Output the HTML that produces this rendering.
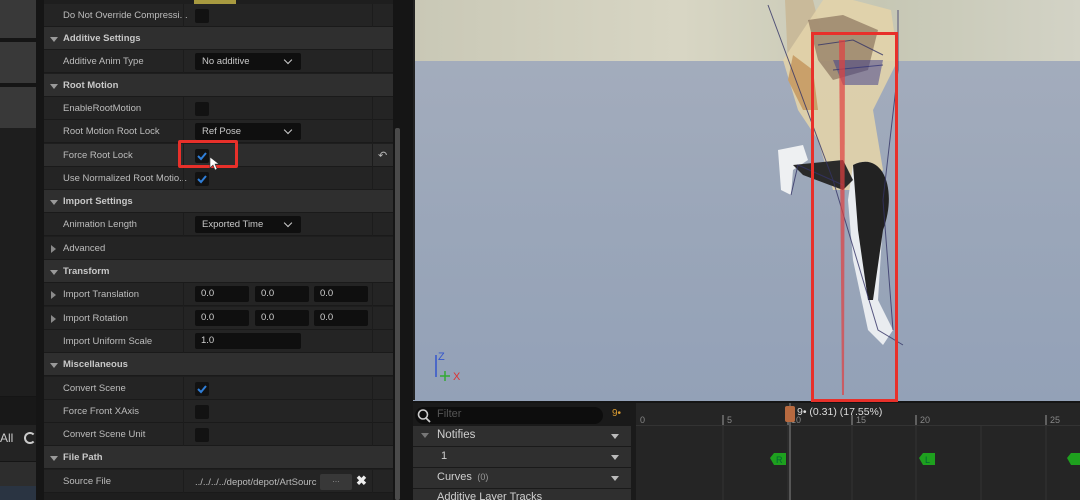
<!DOCTYPE html>
<html><head><meta charset="utf-8"><style>
*{margin:0;padding:0;box-sizing:border-box}
body{width:1080px;height:500px;overflow:hidden;background:#151515;font-family:"Liberation Sans",sans-serif;position:relative}
.a{position:absolute}
.row{position:absolute;left:44px;width:349px;height:23px;background:#242424;border-bottom:1px solid #1a1a1a}
.row .l{position:absolute;left:19px;top:6px;font-size:9.5px;color:#bdbdbd;white-space:nowrap}
.row .sp{position:absolute;left:139px;top:0;width:1px;height:23px;background:#1c1c1c}
.row .sp2{position:absolute;left:328px;top:0;width:1px;height:23px;background:#1c1c1c}
.hd{background:#2f2f2f}
.hd .l{font-weight:bold;color:#c8c8c8;left:19px}
.tri{position:absolute;left:6px;top:10px;width:0;height:0;border-left:4px solid transparent;border-right:4px solid transparent;border-top:5px solid #9a9a9a}
.trr{position:absolute;left:7px;top:8px;width:0;height:0;border-top:4px solid transparent;border-bottom:4px solid transparent;border-left:5px solid #8a8a8a}
.cb{position:absolute;left:151px;top:5px;width:14px;height:14px;background:#121212;border-radius:2px}
.cb svg{position:absolute;left:1px;top:1px}
.dd{position:absolute;left:151px;top:3px;width:106px;height:17px;background:#0f0f0f;border-radius:2px;font-size:9.5px;color:#c8c8c8;padding:3px 0 0 7px}
.dd:after{content:"";position:absolute;right:10px;top:4px;width:5px;height:5px;border-right:1.5px solid #ccc;border-bottom:1.5px solid #ccc;transform:rotate(45deg)}
.nb{position:absolute;top:3px;width:54px;height:16px;background:#0f0f0f;border-radius:2px;font-size:9.5px;color:#d0d0d0;padding:2px 0 0 6px}
.tl{position:absolute;left:413px;width:218px;height:20px;background:#2f2f2f;color:#d0d0d0;font-size:11px}
.tl .d{position:absolute;right:12px;top:8px;border-left:4px solid transparent;border-right:4px solid transparent;border-top:5px solid #bbb}
</style></head><body>
<div class="a" style="left:0;top:0;width:36px;height:38px;background:#393939"></div>
<div class="a" style="left:0;top:42px;width:36px;height:41px;background:#393939"></div>
<div class="a" style="left:0;top:87px;width:36px;height:41px;background:#393939"></div>
<div class="a" style="left:0;top:128px;width:36px;height:268px;background:#1e1e1e"></div>
<div class="a" style="left:0;top:397px;width:36px;height:28px;background:#181818"></div>
<div class="a" style="left:0;top:425px;width:36px;height:36px;background:#232323"></div>
<div class="a" style="left:0;top:431px;font-size:12px;color:#ccc">All</div>
<div class="a" style="left:24px;top:432px;width:12px;height:12px;border:2px solid #ccc;border-radius:50%;border-right-color:transparent"></div>
<div class="a" style="left:0;top:462px;width:36px;height:24px;background:#2d2d2d"></div>
<div class="a" style="left:0;top:486px;width:36px;height:14px;background:#2a3442"></div>
<div class="a" style="left:44px;top:0;width:349px;height:500px;background:#1e1e1e"></div>
<div class="a" style="left:395px;top:128px;width:5px;height:372px;background:#4a4a4a;border-radius:2px"></div>

<div class="row" style="top:4px"><div class="l">Do Not Override Compressi...</div><div class="sp"></div><div class="sp2"></div><div class="cb"></div><div class="a" style="left:150px;top:-4px;width:42px;height:4px;background:#a89a40"></div></div>
<div class="row hd" style="top:27px"><div class="tri"></div><div class="l">Additive Settings</div></div>
<div class="row" style="top:50px"><div class="l">Additive Anim Type</div><div class="sp"></div><div class="sp2"></div><div class="dd">No additive</div></div>
<div class="row hd" style="top:74px"><div class="tri"></div><div class="l">Root Motion</div></div>
<div class="row" style="top:97px"><div class="l">EnableRootMotion</div><div class="sp"></div><div class="sp2"></div><div class="cb"></div></div>
<div class="row" style="top:120px"><div class="l">Root Motion Root Lock</div><div class="sp"></div><div class="sp2"></div><div class="dd">Ref Pose</div></div>
<div class="row" style="top:144px;background:#2d2d2d"><div class="l">Force Root Lock</div><div class="sp"></div><div class="sp2"></div><div class="cb"><svg width="12" height="12"><path d="M2 6 L5 9 L10 3" stroke="#2f7ed8" stroke-width="2" fill="none"/></svg></div><div class="a" style="left:334px;top:5px;font-size:11px;color:#bbb">↶</div></div>
<div class="row" style="top:167px"><div class="l">Use Normalized Root Motio...</div><div class="sp"></div><div class="sp2"></div><div class="cb"><svg width="12" height="12"><path d="M2 6 L5 9 L10 3" stroke="#2f7ed8" stroke-width="2" fill="none"/></svg></div></div>
<div class="row hd" style="top:190px"><div class="tri"></div><div class="l">Import Settings</div></div>
<div class="row" style="top:213px"><div class="l">Animation Length</div><div class="sp"></div><div class="sp2"></div><div class="dd">Exported Time</div></div>
<div class="row" style="top:237px"><div class="trr"></div><div class="l">Advanced</div></div>
<div class="row hd" style="top:260px"><div class="tri"></div><div class="l">Transform</div></div>
<div class="row" style="top:283px"><div class="trr"></div><div class="l">Import Translation</div><div class="sp"></div><div class="sp2"></div><div class="nb" style="left:151px">0.0</div><div class="nb" style="left:211px">0.0</div><div class="nb" style="left:270px">0.0</div></div>
<div class="row" style="top:307px"><div class="trr"></div><div class="l">Import Rotation</div><div class="sp"></div><div class="sp2"></div><div class="nb" style="left:151px">0.0</div><div class="nb" style="left:211px">0.0</div><div class="nb" style="left:270px">0.0</div></div>
<div class="row" style="top:330px"><div class="l">Import Uniform Scale</div><div class="sp"></div><div class="sp2"></div><div class="nb" style="left:151px;width:106px">1.0</div></div>
<div class="row hd" style="top:353px"><div class="tri"></div><div class="l">Miscellaneous</div></div>
<div class="row" style="top:377px"><div class="l">Convert Scene</div><div class="sp"></div><div class="sp2"></div><div class="cb"><svg width="12" height="12"><path d="M2 6 L5 9 L10 3" stroke="#2f7ed8" stroke-width="2" fill="none"/></svg></div></div>
<div class="row" style="top:400px"><div class="l">Force Front XAxis</div><div class="sp"></div><div class="sp2"></div><div class="cb"></div></div>
<div class="row" style="top:423px"><div class="l">Convert Scene Unit</div><div class="sp"></div><div class="sp2"></div><div class="cb"></div></div>
<div class="row hd" style="top:446px"><div class="tri"></div><div class="l">File Path</div></div>
<div class="row" style="top:470px"><div class="l">Source File</div><div class="sp"></div><div class="sp2"></div><div class="a" style="left:151px;top:7px;font-size:9.5px;color:#bbb">../../../../depot/depot/ArtSourc</div><div class="a" style="left:276px;top:4px;width:32px;height:16px;background:#383838;border-radius:2px;color:#888;font-size:9px;text-align:center">...</div><div class="a" style="left:312px;top:3px;font-size:13px;color:#eee;font-weight:bold">✖</div></div>
<div class="a" style="left:178px;top:140px;width:60px;height:28px;border:3px solid #e8302a;border-radius:2px"></div>
<svg class="a" style="left:209px;top:156px" width="10" height="16"><path d="M1 1 L1 12 L4 9 L6 14 L8 13 L6 8 L10 8 Z" fill="#fff" stroke="#333" stroke-width=".6"/></svg>

<div class="a" style="left:413px;top:0;width:667px;height:61px;background:linear-gradient(90deg,#c9c8b6,#d8d6c4 40%,#c6c7b4 70%,#d3d3c6)"></div>
<div class="a" style="left:413px;top:61px;width:667px;height:340px;background:linear-gradient(180deg,#a3acbc,#9aa6b9 50%,#93a1b7)"></div>
<div class="a" style="left:413px;top:0;width:2px;height:400px;background:#222"></div>
<svg class="a" style="left:413px;top:0" width="667" height="400">
<path d="M372 0 L400 0 L410 40 L395 70 L375 65 Z" fill="#c8b592" opacity=".8"/>
<path d="M410 0 L440 0 L478 10 L485 60 L460 110 L470 170 L455 190 L420 190 L405 140 L385 110 L370 60 Z" fill="#e2d3aa" opacity=".9"/>
<path d="M380 55 L400 70 L405 110 L390 110 L375 80 Z" fill="#c9a06a"/>
<path d="M395 20 L430 15 L465 30 L455 70 L420 80 L405 60 Z" fill="#6a5040" opacity=".5"/>
<path d="M440 165 C470 150 480 190 470 220 L465 300 L480 330 L470 345 L455 330 L440 260 L435 200 Z" fill="#e9ecf0"/>
<path d="M440 165 C470 150 485 190 470 230 L460 300 L455 300 L445 230 Z" fill="#222"/>
<path d="M365 150 L390 145 L395 160 L380 170 L378 195 L368 190 Z" fill="#eef0f2"/>
<path d="M380 165 L430 160 L440 180 L430 190 L390 175 Z" fill="#2a2a2a"/>
<g stroke="#333366" stroke-width="1" fill="none" opacity=".8"><path d="M355 5 L420 180 L465 330 L490 345"/><path d="M485 10 L485 70 L470 200 L480 330"/><path d="M405 45 L440 40 L470 55"/><path d="M420 70 L470 65"/><path d="M378 195 L385 165 L430 185"/></g>
<path d="M420 60 L470 60 L465 85 L430 85 Z" fill="#3a3a8a" opacity=".5"/>
<path d="M426 40 L432 40 L431 395 L429 395 Z" fill="#e04040" opacity=".7"/>
<text x="25" y="360" fill="#3355cc" font-size="11" font-family="Liberation Sans">Z</text>
<path d="M23 355 L23 377" stroke="#3355cc" stroke-width="1.5"/><path d="M27 376 L37 376 M32 371 L32 381" stroke="#33aa33" stroke-width="1.5"/>
<text x="40" y="380" fill="#dd3333" font-size="11" font-family="Liberation Sans">X</text>
</svg>
<div class="a" style="left:811px;top:32px;width:87px;height:370px;border:3px solid #e8302a"></div>

<div class="a" style="left:413px;top:403px;width:667px;height:97px;background:#1a1a1a"></div>
<div class="a" style="left:415px;top:407px;width:188px;height:17px;background:#0d0d0d;border-radius:9px"></div>
<svg class="a" style="left:416px;top:408px" width="16" height="16"><circle cx="7" cy="6.5" r="4.5" stroke="#ccc" stroke-width="1.6" fill="none"/><path d="M10 10 L14 14" stroke="#ccc" stroke-width="1.8"/></svg>
<div class="a" style="left:437px;top:408px;font-size:11px;color:#555">Filter</div>
<div class="a" style="left:612px;top:408px;font-size:10px;color:#d89a30">9•</div>
<div class="tl" style="top:426px"><div class="a" style="left:8px;top:7px;border-left:4px solid transparent;border-right:4px solid transparent;border-top:5px solid #777"></div><div class="a" style="left:24px;top:3px;font-size:11.5px">Notifies</div><div class="d"></div></div>
<div class="tl" style="top:447px"><div class="a" style="left:28px;top:3px">1</div><div class="d"></div></div>
<div class="tl" style="top:468px"><div class="a" style="left:24px;top:3px">Curves <span style="font-size:9px;color:#999">&nbsp;(0)</span></div><div class="d"></div></div>
<div class="tl" style="top:489px;height:11px;overflow:hidden"><div class="a" style="left:24px;top:2px">Additive Layer Tracks</div></div>
<div class="a" style="left:636px;top:403px;width:444px;height:97px;background:#252525"></div>
<div class="a" style="left:636px;top:425px;width:444px;height:1px;background:#333"></div>
<svg class="a" style="left:636px;top:403px" width="444" height="97">
<g stroke="#333"><path d="M87 22 V97 M152 22 V97 M216 22 V97 M280 22 V97 M345 22 V97 M410 22 V97"/></g>
<g stroke="#999"><path d="M87 12 V22 M152 12 V22 M216 12 V22 M280 12 V22 M410 12 V22"/></g>
<g fill="#888" font-size="9" font-family="Liberation Sans"><text x="4" y="20">0</text><text x="91" y="20">5</text><text x="155" y="20">10</text><text x="220" y="20">15</text><text x="284" y="20">20</text><text x="414" y="20">25</text></g>
<path d="M154 0 V97" stroke="#888"/>
<rect x="149" y="3" width="10" height="16" rx="2" fill="#b86a40"/>
<text x="161" y="12" fill="#ddd" font-size="10.5" font-family="Liberation Sans">9• (0.31) (17.55%)</text>
<path d="M134 55 L138 50 L150 50 L150 62 L138 62 Z" fill="#1ea01e"/><text x="140" y="60" fill="#063" font-size="9">R</text>
<path d="M283 55 L287 50 L299 50 L299 62 L287 62 Z" fill="#1ea01e"/><text x="289" y="60" fill="#063" font-size="9">L</text>
<path d="M431 55 L435 50 L447 50 L447 62 L435 62 Z" fill="#1ea01e"/>
</svg>
</body></html>
